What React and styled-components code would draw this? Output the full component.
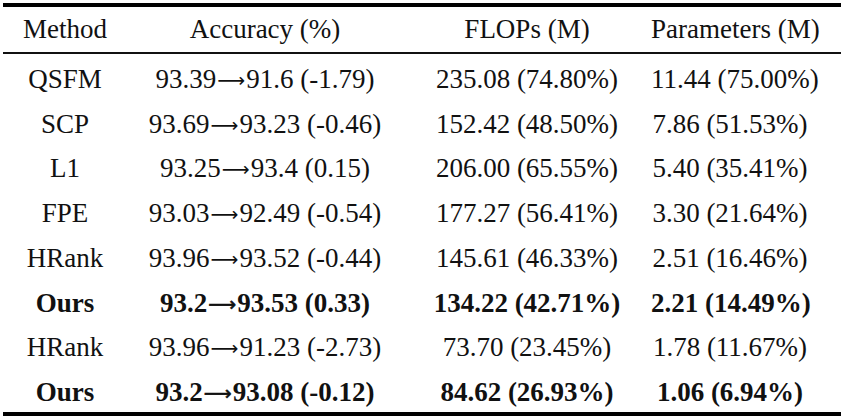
import React from 'react'
import styled, { createGlobalStyle } from 'styled-components'

const Global = createGlobalStyle`
body{
margin:0;
background:#fff;
}
`

const Wrapper = styled.div`
padding:3px 0 0 3px;
font-family:"Liberation Serif","Times New Roman",serif;
color:#111;
`

const Table = styled.div`
width:838px;
border-top:4px solid #000;
border-bottom:4px solid #000;
`

const Row = styled.div`
display:grid;
grid-template-columns:124px 276px 248px 190px;
height:${p => (p.$head ? '45px' : '44.75px')};
align-items:center;
border-bottom:${p => (p.$head ? '2px solid #111' : 'none')};
font-size:27px;
font-weight:${p => (p.$bold ? 700 : 400)};
`

const Cell = styled.div`
text-align:center;
white-space:nowrap;
padding-right:${p => (p.$last ? '32px' : '0')};
padding-top:${p => (p.$head ? '0' : '6px')};
`

const Arrow = styled.span`
font-family:"DejaVu Sans",sans-serif;
font-size:0.72em;
font-weight:400;
margin:0 1px;
position:relative;
top:-1px;
-webkit-text-stroke:${p => (p.$bold ? '0.6px #111' : '0')};
`

const head = ['Method', 'Accuracy (%)', 'FLOPs (M)', 'Parameters (M)']

const rows = [
  ['QSFM', ['93.39', '91.6 (-1.79)'], '235.08 (74.80%)', '11.44 (75.00%)'],
  ['SCP', ['93.69', '93.23 (-0.46)'], '152.42 (48.50%)', '7.86 (51.53%)'],
  ['L1', ['93.25', '93.4 (0.15)'], '206.00 (65.55%)', '5.40 (35.41%)'],
  ['FPE', ['93.03', '92.49 (-0.54)'], '177.27 (56.41%)', '3.30 (21.64%)'],
  ['HRank', ['93.96', '93.52 (-0.44)'], '145.61 (46.33%)', '2.51 (16.46%)'],
  ['Ours', ['93.2', '93.53 (0.33)'], '134.22 (42.71%)', '2.21 (14.49%)', true],
  ['HRank', ['93.96', '91.23 (-2.73)'], '73.70 (23.45%)', '1.78 (11.67%)'],
  ['Ours', ['93.2', '93.08 (-0.12)'], '84.62 (26.93%)', '1.06 (6.94%)', true],
]

export default function App() {
  return (
    <Wrapper>
      <Global />
      <Table>
        <Row $head>
          {head.map((h, i) => (
            <Cell key={h} $head $last={i === 3}>{h}</Cell>
          ))}
        </Row>
        {rows.map((r, idx) => (
          <Row key={idx} $bold={r[4]}>
            <Cell>{r[0]}</Cell>
            <Cell>{r[1][0]}<Arrow $bold={r[4]}>⟶</Arrow>{r[1][1]}</Cell>
            <Cell>{r[2]}</Cell>
            <Cell $last>{r[3]}</Cell>
          </Row>
        ))}
      </Table>
    </Wrapper>
  )
}
